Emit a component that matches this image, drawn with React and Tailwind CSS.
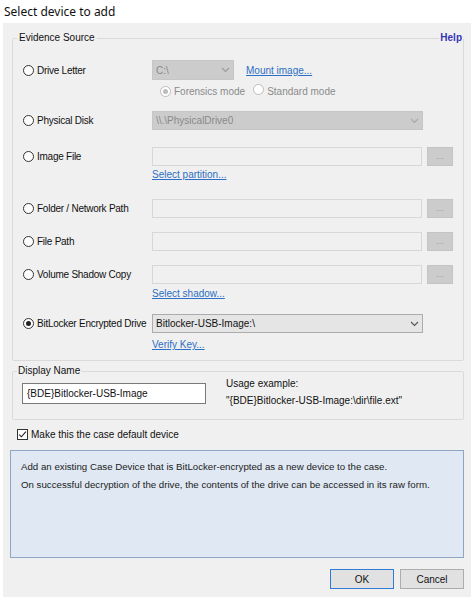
import React from 'react';

const Radio = ({ checked, disabled }) => (
  <span
    className={`inline-flex items-center justify-center w-[11px] h-[11px] rounded-full border bg-white shrink-0 ${
      disabled ? 'border-[#bcbcbc]' : 'border-[#333]'
    }`}
  >
    {checked && (
      <span className={`w-[5px] h-[5px] rounded-full ${disabled ? 'bg-[#bcbcbc]' : 'bg-[#222]'}`} />
    )}
  </span>
);

const Chevron = ({ color = '#888' }) => (
  <svg width="9" height="6" viewBox="0 0 9 6" className="shrink-0">
    <path d="M1 1l3.5 3.5L8 1" fill="none" stroke={color} strokeWidth="1.1" />
  </svg>
);

const Link = ({ children }) => (
  <span className="text-[#2c6fc4] underline leading-[12px]">{children}</span>
);

const DotsButton = () => (
  <div className="w-[26px] h-[19px] ml-[5px] bg-[#cccccc] border border-[#c4c4c4] flex items-center justify-center text-[#9a9a9a] text-[9px] leading-none">
    ...
  </div>
);

const EmptyInput = () => (
  <div className="w-[270px] h-[19px] bg-[#f0f0f0] border border-[#d7d7d7]" />
);

const Row = ({ label, checked, className = '', children }) => (
  <div className={`flex items-center ${className}`}>
    <div className="w-[139px] pl-[10px] flex items-center gap-[3px] shrink-0">
      <Radio checked={checked} />
      <span className="text-[#111] whitespace-nowrap tracking-[-0.25px]">{label}</span>
    </div>
    <div className="flex items-center">{children}</div>
  </div>
);

const SubLink = ({ children, className = '' }) => (
  <div className={`pl-[139px] h-[12px] flex items-center ${className}`}>
    <Link>{children}</Link>
  </div>
);

export default function App() {
  return (
    <div
      className="w-[474px] h-[600px] bg-white text-[10px] text-[#111] flex flex-col"
      style={{ fontFamily: '"Liberation Sans", Arial, sans-serif' }}
    >
      <div className="h-[23px] pl-[4px] flex items-center text-[12px] text-[#111]" style={{ fontFamily: '"Noto Sans", sans-serif' }}>
        Select device to add
      </div>

      <div className="mx-[3px] h-[574px] bg-[#f0f0f0] flex flex-col">
        {/* Evidence Source */}
        <div className="relative ml-[9px] mt-[9px] w-[452px]">
          <fieldset className="border border-[#dadada] rounded-[2px] pb-[9px]">
            <legend className="ml-[4px] px-[2px] leading-[12px] text-[#111]">Evidence Source</legend>

            <Row label="Drive Letter" className="mt-[16px] h-[20px]">
              <div className="w-[82px] h-[20px] bg-[#cccccc] border border-[#c6c6c6] flex items-center justify-between px-[3px] text-[#8a8a8a]">
                <span>C:\</span>
                <Chevron color="#9a9a9a" />
              </div>
              <span className="ml-[12px]">
                <Link>Mount image...</Link>
              </span>
            </Row>
            <div className="pl-[147px] mt-[4px] h-[14px] flex items-center text-[#8a8a8a]">
              <Radio checked disabled />
              <span className="ml-[3px]">Forensics mode</span>
              <span className="ml-[8px]">
                <Radio disabled />
              </span>
              <span className="ml-[3px]">Standard mode</span>
            </div>

            <Row label="Physical Disk" className="mt-[13px] h-[19px]">
              <div className="w-[271px] h-[19px] bg-[#cccccc] border border-[#c6c6c6] flex items-center justify-between px-[3px] text-[#8a8a8a]">
                <span>\\.\PhysicalDrive0</span>
                <Chevron color="#a8a8a8" />
              </div>
            </Row>

            <Row label="Image File" className="mt-[17px] h-[19px]">
              <EmptyInput />
              <DotsButton />
            </Row>
            <SubLink className="mt-[3px]">Select partition...</SubLink>

            <Row label="Folder / Network Path" className="mt-[18px] h-[19px]">
              <EmptyInput />
              <DotsButton />
            </Row>

            <Row label="File Path" className="mt-[14px] h-[19px]">
              <EmptyInput />
              <DotsButton />
            </Row>

            <Row label="Volume Shadow Copy" className="mt-[14px] h-[19px]">
              <EmptyInput />
              <DotsButton />
            </Row>
            <SubLink className="mt-[4px]">Select shadow...</SubLink>

            <Row label="BitLocker Encrypted Drive" checked className="mt-[14px] h-[19px]">
              <div className="w-[271px] h-[19px] bg-[#e5e5e5] border border-[#acacac] flex items-center justify-between px-[3px] text-[#111]">
                <span>Bitlocker-USB-Image:\</span>
                <Chevron color="#555" />
              </div>
            </Row>
            <SubLink className="mt-[6px]">Verify Key...</SubLink>
          </fieldset>
          <span className="absolute top-0 right-[1px] px-[1px] bg-[#f0f0f0] leading-[12px] text-[#3535b8] font-bold">
            Help
          </span>
        </div>

        {/* Display Name */}
        <fieldset className="ml-[9px] mt-[4px] w-[452px] border border-[#dadada] rounded-[2px] pb-[15px]">
          <legend className="ml-[4px] px-[1px] leading-[12px]">Display Name</legend>
          <div className="flex items-start mt-[6px] pl-[9px] h-[21px]">
            <div className="w-[184px] h-[21px] bg-white border border-[#7a7a7a] flex items-center px-[4px]">
              {'{BDE}Bitlocker-USB-Image'}
            </div>
            <div className="ml-[20px] -mt-[8px] leading-[17px]">
              <div>Usage example:</div>
              <div>"{'{BDE}'}Bitlocker-USB-Image:\dir\file.ext"</div>
            </div>
          </div>
        </fieldset>

        {/* default device */}
        <div className="ml-[14px] mt-[8px] h-[12px] flex items-center gap-[3px]">
          <span className="w-[11px] h-[11px] border border-[#333] bg-white flex items-center justify-center">
            <svg width="9" height="9" viewBox="0 0 9 9">
              <path d="M1.2 4.6l2.2 2.2L7.9 1.6" fill="none" stroke="#222" strokeWidth="1.1" />
            </svg>
          </span>
          <span>Make this the case default device</span>
        </div>

        {/* description */}
        <div className="ml-[7px] mt-[10px] w-[454px] h-[108px] bg-[#dfe8f3] border border-[#8ea6c4] px-[10px] pt-[10px] text-[9.7px] text-[#222]">
          <p className="leading-[12px]">Add an existing Case Device that is BitLocker-encrypted as a new device to the case.</p>
          <p className="leading-[12px] mt-[6px]">
            On successful decryption of the drive, the contents of the drive can be accessed in its raw form.
          </p>
        </div>

        {/* buttons */}
        <div className="mt-[11px] pr-[7px] flex justify-end gap-[6px]">
          <button className="w-[64px] h-[20px] bg-[#e1e1e1] border border-[#2f7bd6] text-[10px] text-[#111]">OK</button>
          <button className="w-[64px] h-[20px] bg-[#e1e1e1] border border-[#adadad] text-[10px] text-[#111]">Cancel</button>
        </div>
      </div>
    </div>
  );
}
